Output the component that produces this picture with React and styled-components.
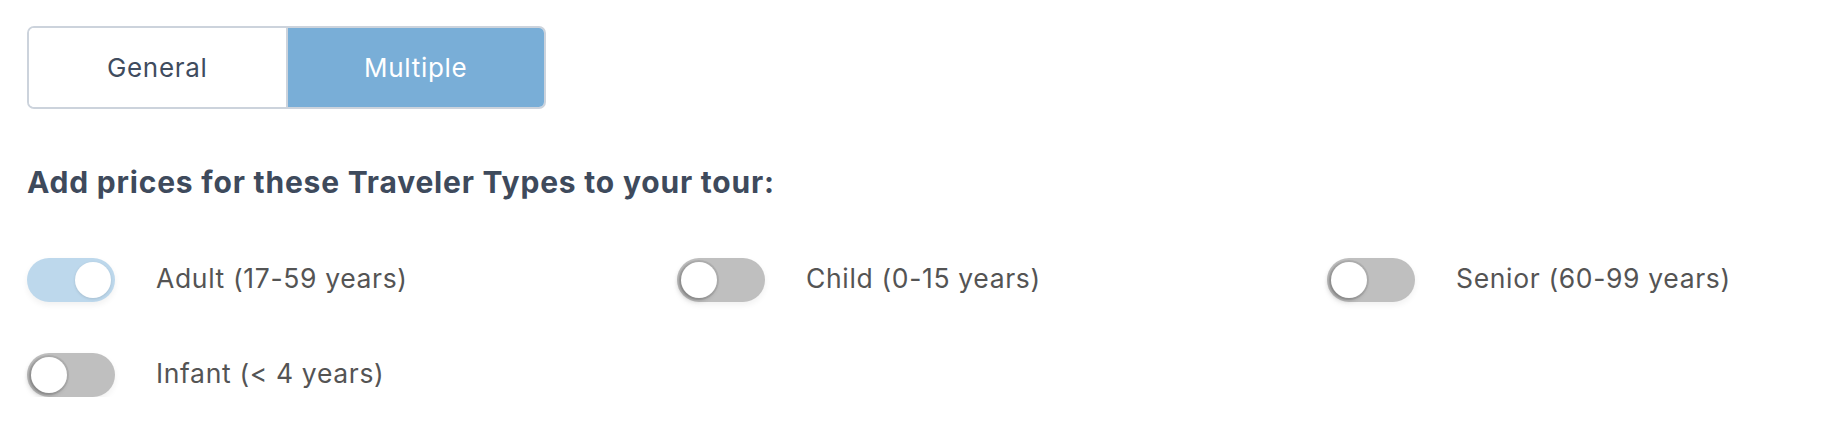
import React, { useState } from "react";
import styled, { createGlobalStyle } from "styled-components";

const GlobalStyle = createGlobalStyle`
  body {
    margin: 0;
    background: #ffffff;
    font-family: Inter, "Noto Sans", sans-serif;
  }
`;

const Page = styled.div`
  padding: 26px 27px 0;
  display: flex;
  flex-direction: column;
`;

const Segment = styled.div`
  display: flex;
  width: 519px;
  height: 83px;
  box-sizing: border-box;
  border: 2px solid #ccd3dc;
  border-radius: 7px;
  overflow: hidden;
`;

const SegmentButton = styled.button`
  flex: 1;
  border: none;
  border-left: ${({ first }) => (first ? "none" : "2px solid #ccd3dc")};
  background: ${({ active }) => (active ? "#79aed7" : "#ffffff")};
  color: ${({ active }) => (active ? "#ffffff" : "#3f4c5e")};
  font-family: Inter, sans-serif;
  font-size: 26px;
  letter-spacing: 0.7px;
  font-weight: 400;
  cursor: pointer;
  padding: 0;
`;

const Title = styled.h2`
  margin: 55px 0 0;
  font-size: 30px;
  line-height: 36px;
  letter-spacing: 0.8px;
  font-weight: 700;
  color: #3e4a5c;
`;

const Grid = styled.div`
  margin-top: 58px;
  display: grid;
  grid-template-columns: 650px 650px 1fr;
  row-gap: 51px;
`;

const Option = styled.label`
  display: flex;
  align-items: center;
  height: 44px;
  gap: 41px;
  cursor: pointer;
`;

const Track = styled.span`
  position: relative;
  flex: none;
  width: 88px;
  height: 44px;
  border-radius: 22px;
  background: ${({ on }) => (on ? "#bdd8ec" : "#bfbfbf")};
  box-shadow: 0 3px 6px rgba(0, 0, 0, 0.06);
`;

const Knob = styled.span`
  position: absolute;
  top: 4px;
  left: ${({ on }) => (on ? "48px" : "4px")};
  width: 36px;
  height: 36px;
  border-radius: 50%;
  background: #ffffff;
  box-shadow: ${({ on }) =>
    on
      ? "0 1px 3px rgba(0, 0, 0, 0.12)"
      : "-2px 2px 5px rgba(0, 0, 0, 0.28), 0 0 0 2px #b0b0b0"};
`;

const Label = styled.span`
  font-size: 26.5px;
  letter-spacing: 0.65px;
  line-height: 44px;
  margin-top: -4px;
  color: #545454;
`;

const travelerTypes = [
  { id: "adult", label: "Adult (17-59 years)" },
  { id: "child", label: "Child (0-15 years)" },
  { id: "senior", label: "Senior (60-99 years)" },
  { id: "infant", label: "Infant (< 4 years)" },
];

export default function App() {
  const [mode, setMode] = useState("multiple");
  const [enabled, setEnabled] = useState({ adult: true });

  const toggle = (id) => setEnabled({ ...enabled, [id]: !enabled[id] });

  return (
    <Page>
      <GlobalStyle />
      <Segment>
        <SegmentButton
          first
          active={mode === "general"}
          onClick={() => setMode("general")}
        >
          General
        </SegmentButton>
        <SegmentButton
          active={mode === "multiple"}
          onClick={() => setMode("multiple")}
        >
          Multiple
        </SegmentButton>
      </Segment>
      <Title>Add prices for these Traveler Types to your tour:</Title>
      <Grid>
        {travelerTypes.map((t) => (
          <Option key={t.id} onClick={() => toggle(t.id)}>
            <Track on={enabled[t.id]}>
              <Knob on={enabled[t.id]} />
            </Track>
            <Label>{t.label}</Label>
          </Option>
        ))}
      </Grid>
    </Page>
  );
}
